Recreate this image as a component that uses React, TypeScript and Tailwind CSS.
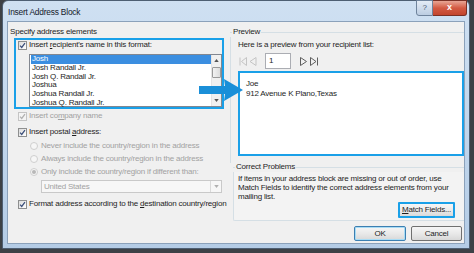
import React from "react";

const FONT = { fontFamily: '"Liberation Sans", Arial, sans-serif' };

/* Win7-style checkbox, 9px */
function Check({ checked = true, disabled = false }: { checked?: boolean; disabled?: boolean }) {
  return (
    <span
      className={`w-[9px] h-[9px] shrink-0 border flex items-center justify-center ${
        disabled ? "border-[#c4c4c4] bg-[#f4f4f4]" : "border-[#8e8f8f] bg-gradient-to-br from-[#dcdcdc] to-white"
      }`}
    >
      {checked && (
        <svg viewBox="0 0 8 8" className="w-[7px] h-[7px]">
          <path
            d="M1.2 4.2 L3.1 6.2 L6.8 1.2"
            fill="none"
            stroke={disabled ? "#b0b0b0" : "#3b4f7a"}
            strokeWidth="1.4"
          />
        </svg>
      )}
    </span>
  );
}

function Radio({ selected = false }: { selected?: boolean }) {
  return (
    <span className="w-[8px] h-[8px] shrink-0 rounded-full border border-[#cfcfcf] bg-[#f6f6f6] flex items-center justify-center">
      {selected && <span className="w-[4px] h-[4px] rounded-full bg-[#b8b8b8]" />}
    </span>
  );
}

function Btn({ children, className = "" }: { children: React.ReactNode; className?: string }) {
  return (
    <div
      className={`h-[15px] rounded-[2px] flex items-center justify-center text-[#1e1e1e] bg-gradient-to-b from-[#f6f6f6] via-[#e9e9e9] to-[#d8d8d8] ${className}`}
    >
      {children}
    </div>
  );
}

const NAMES = [
  "Josh",
  "Josh Randall Jr.",
  "Josh Q. Randall Jr.",
  "Joshua",
  "Joshua Randall Jr.",
  "Joshua Q. Randall Jr.",
];

export default function App() {
  return (
    <div
      className="w-[474px] h-[253px] bg-[#3d4146] pl-[2px] overflow-hidden text-[8px] tracking-[-0.2px] text-[#1e1e1e]"
      style={FONT}
    >
      <div className="w-[468px] h-[249px] rounded-t-[6px] border border-[#4e5f73] bg-gradient-to-b from-[#cfe0f2] via-[#c2d7ed] to-[#b4cce6] px-[4px] flex flex-col">
        {/* Title bar */}
        <div className="h-[20px] flex justify-between">
          <span className="pl-[1px] pt-[5px] text-[8.4px] text-[#15202c]">Insert Address Block</span>
          <div className="flex -mt-[1px] -mr-[2px] h-[16px]">
            <div className="w-[17px] rounded-bl-[3px] border border-[#6f839c] bg-gradient-to-b from-[#e4ecf6] to-[#bccde2] flex items-center justify-center text-[8px] text-[#4a5a70]">
              ?
            </div>
            <div className="w-[34px] rounded-br-[3px] border border-l-0 border-[#7a3025] bg-gradient-to-b from-[#e7a595] via-[#d35a43] to-[#c2452e] flex items-center justify-center text-[9px] font-bold text-white">
              x
            </div>
          </div>
        </div>

        {/* Client area */}
        <div className="flex-1 mb-[4px] bg-[#f0f0f0] border border-[#8ba1ba] flex">
          {/* Left column */}
          <div className="w-[219px] pl-[2px] flex flex-col">
            <div className="mt-[5px] h-[10px] leading-[10px]">Specify address elements</div>

            {/* Annotated name format block */}
            <div className="mt-[1px] ml-[4px] w-[210px] h-[71px] border-2 border-[#1aa0e8] flex flex-col">
              <div className="h-[10px] pl-[2px] flex items-center gap-[2px]">
                <Check />
                <span>
                  Insert <span className="underline">r</span>ecipient's name in this format:
                </span>
              </div>
              <div className="mt-[4px] ml-[13px] w-[193px] h-[53px] border border-[#828790] bg-white flex">
                <div className="flex-1 pl-[1px] pt-0">
                  {NAMES.map((n, i) => (
                    <div
                      key={n}
                      className={`h-[8.8px] leading-[8.8px] pl-[1px] ${
                        i === 0 ? "bg-[#3b8ee0] text-white" : ""
                      }`}
                    >
                      {n}
                    </div>
                  ))}
                </div>
                <div className="w-[10px] bg-[#f0f0f0] border-l border-[#e4e4e4] flex flex-col items-center">
                  <svg viewBox="0 0 6 4" className="w-[5px] h-[3px] mt-[4px]">
                    <path d="M0 4 L3 0 L6 4 Z" fill="#555" />
                  </svg>
                  <div className="mt-[5px] w-[9px] h-[11px] rounded-[1px] border border-[#9a9a9a] bg-gradient-to-r from-[#f2f2f2] to-[#dcdcdc]" />
                  <div className="flex-1" />
                  <svg viewBox="0 0 6 4" className="w-[5px] h-[3px] mb-[4px]">
                    <path d="M0 0 L6 0 L3 4 Z" fill="#555" />
                  </svg>
                </div>
              </div>
            </div>

            <div className="mt-[2px] ml-[8px] h-[10px] flex items-center gap-[2px] text-[#a2a2a2]">
              <Check disabled />
              <span>
                Insert co<span className="underline">m</span>pany name
              </span>
            </div>

            <div className="mt-[6px] ml-[8px] h-[10px] flex items-center gap-[2px]">
              <Check />
              <span>
                Insert postal <span className="underline">a</span>ddress:
              </span>
            </div>

            <div className="mt-[2px] ml-[20px] flex flex-col text-[#a2a2a2]">
              <div className="h-[13px] flex items-center gap-[3px]">
                <Radio />
                <span>Never include the country/region in the address</span>
              </div>
              <div className="h-[13px] flex items-center gap-[3px]">
                <Radio />
                <span>Always include the country/region in the address</span>
              </div>
              <div className="h-[13px] flex items-center gap-[3px]">
                <Radio selected />
                <span>Only include the country/region if different than:</span>
              </div>
            </div>

            <div className="mt-[2px] ml-[31px] w-[181px] h-[13px] border border-[#c9c9c9] bg-[#f7f7f7] flex text-[#a2a2a2]">
              <span className="flex-1 pl-[2px] leading-[11px]">United States</span>
              <div className="w-[11px] border-l border-[#dadada] flex items-center justify-center">
                <svg viewBox="0 0 6 4" className="w-[5px] h-[3px]">
                  <path d="M0 0 L6 0 L3 4 Z" fill="#b0b0b0" />
                </svg>
              </div>
            </div>

            <div className="mt-[6px] ml-[8px] h-[10px] flex items-center gap-[2px] whitespace-nowrap">
              <Check />
              <span>
                Format address according to the <span className="underline">d</span>estination country/region
              </span>
            </div>
          </div>

          {/* Arrow column */}
          <div className="w-[12px] relative">
            <svg
              viewBox="0 0 44 22"
              className="absolute left-[-27px] top-[57px] w-[44px] h-[22px] z-10"
            >
              <path d="M0 7 L26 7 L25 0 L44 11 L25 22 L26 15 L0 15 Z" fill="#1a8fd8" />
            </svg>
          </div>

          {/* Right column */}
          <div className="w-[235px] flex flex-col">
            {/* Preview group */}
            <div className="mt-[5px] h-[10px] flex items-center">
              <span className="w-[2px] h-px bg-[#d5dfe5] self-center" />
              <span className="px-[1px] leading-[10px]">Preview</span>
              <span className="flex-1 h-px bg-[#d5dfe5] mt-[1px]" />
            </div>
            <div className="h-[126px] border-l border-[#d5dfe5] flex flex-col">
              <div className="mt-[3px] ml-[7px] h-[10px] leading-[10px]">
                Here is a preview from your recipient list:
              </div>
              <div className="mt-[3px] ml-[8px] h-[16px] flex items-center">
                <svg viewBox="0 0 20 9" className="w-[20px] h-[9px]">
                  <path d="M1 0.5 V8.5 M7.5 0.5 L2.5 4.5 L7.5 8.5 Z M17 0.5 L11 4.5 L17 8.5 Z" fill="none" stroke="#c4c4c4" strokeWidth="1" />
                </svg>
                <div className="ml-[6px] w-[26px] h-[16px] border border-[#abadb3] bg-white pl-[3px] leading-[14px]">1</div>
                <svg viewBox="0 0 20 9" className="ml-[8px] w-[20px] h-[9px]">
                  <path d="M1.5 0.5 L7.5 4.5 L1.5 8.5 Z M11.5 0.5 L17 4.5 L11.5 8.5 Z M18.5 0.5 V8.5" fill="none" stroke="#5e5e5e" strokeWidth="1" />
                </svg>
              </div>
              <div className="mt-[2px] ml-[7px] w-[226px] h-[85px] border-2 border-[#1aa0e8] bg-white pl-[6px] pt-[6px] leading-[10px]">
                <div>Joe</div>
                <div>912 Avenue K Plano,Texas</div>
              </div>
            </div>

            {/* Correct problems group */}
            <div className="mt-[-1px] ml-[3px] flex flex-col">
              <div className="h-[10px] flex items-center">
                <span className="w-[2px] h-px bg-[#d5dfe5]" />
                <span className="px-[1px] leading-[10px]">Correct Problems</span>
                <span className="flex-1 h-px bg-[#d5dfe5] mt-[1px]" />
              </div>
              <div className="h-[49px] border-l border-b border-[#d5dfe5] rounded-bl-[2px] bg-[#f3f3f3] flex flex-col">
                <div className="mt-[2px] pl-[4px] leading-[9px]">
                  <div>If items in your address block are missing or out of order, use</div>
                  <div>Match Fields to identify the correct address elements from your</div>
                  <div>mailing list.</div>
                </div>
                <div className="mt-[1px] self-end mr-[9px] w-[57px] h-[16px] border-2 border-[#1aa0e8] rounded-[1px] bg-gradient-to-b from-[#f6f6f6] via-[#ebebeb] to-[#dadada] flex items-center justify-center">
                  <span>
                    <span className="underline">M</span>atch Fields...
                  </span>
                </div>
              </div>
            </div>

            {/* Buttons */}
            <div className="mt-[5px] flex justify-end gap-[5px] pr-[2px]">
              <Btn className="w-[52px] border border-[#3c7fb1] shadow-[inset_0_0_0_1px_#a8dcf5]">OK</Btn>
              <Btn className="w-[51px] border border-[#707070]">Cancel</Btn>
            </div>
          </div>
        </div>
      </div>
    </div>
  );
}
